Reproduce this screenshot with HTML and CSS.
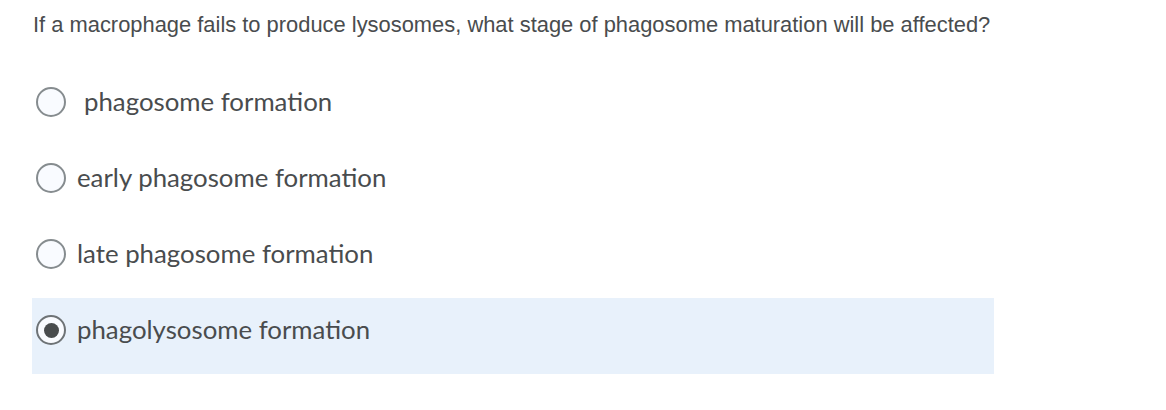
FILE: index.html
```html
<!DOCTYPE html>
<html>
<head>
<meta charset="utf-8">
<link rel="stylesheet" href="styles.css">
</head>
<body>
<div class="quiz">
  <p class="question">If a macrophage fails to produce lysosomes, what stage of phagosome maturation will be affected?</p>
  <div class="options">
    <label class="option"><span class="radio"></span><span class="label first">phagosome formation</span></label>
    <label class="option"><span class="radio"></span><span class="label">early phagosome formation</span></label>
    <label class="option"><span class="radio"></span><span class="label">late phagosome formation</span></label>
    <label class="option selected"><span class="radio checked"></span><span class="label">phagolysosome formation</span></label>
  </div>
</div>
</body>
</html>
```
FILE: styles.css
```css
html, body { margin: 0; padding: 0; background: #fff; }
.quiz { padding: 0 0 0 32px; width: 962px; }
.question {
  margin: 0;
  padding: 10px 0 0 1px;
  font-family: "Liberation Sans", Arial, sans-serif;
  font-size: 21.9px;
  line-height: 30px;
  color: #494c4e;
  height: 70px;
  box-sizing: border-box;
  white-space: nowrap;
}
.options { display: flex; flex-direction: column; }
.option {
  display: flex;
  align-items: flex-start;
  height: 76px;
  box-sizing: border-box;
  padding: 17px 0 0 4px;
}
.option.selected { background: #e8f1fb; }
.radio {
  width: 30px; height: 30px;
  box-sizing: border-box;
  border: 2px solid #868c8f;
  border-radius: 50%;
  background: #f9fbff;
  flex: none;
  display: flex; align-items: center; justify-content: center;
}
.radio.checked { border-color: #6e7376; background: #f9fbff; }
.radio.checked::after {
  content: ""; width: 15px; height: 15px; border-radius: 50%; background: #494c4e;
}
.label {
  font-family: Lato, sans-serif;
  font-size: 25.8px;
  line-height: 28px;
  color: #494c4e;
  margin-left: 11px;
}
.label.first { margin-left: 18px; }
```
